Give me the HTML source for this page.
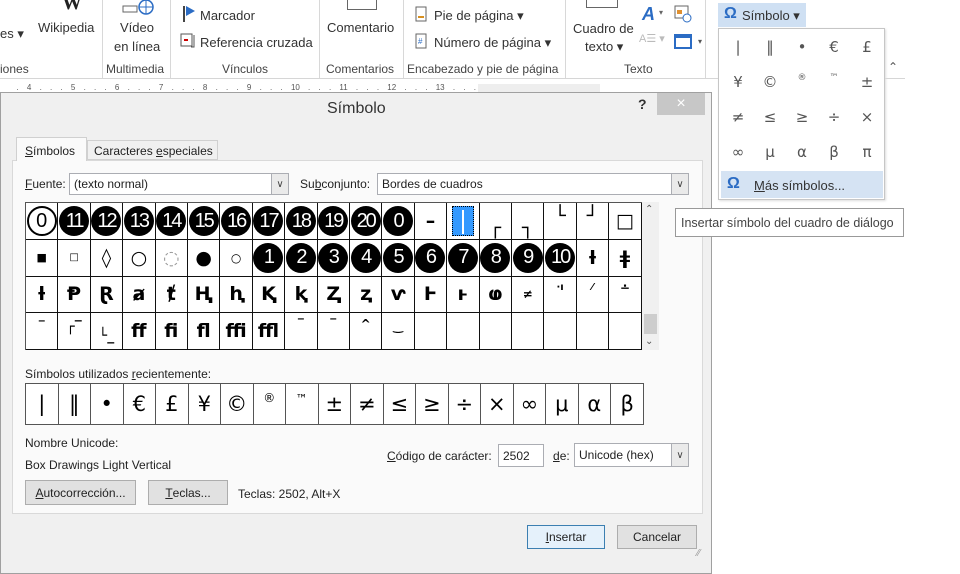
<!DOCTYPE html>
<html><head><meta charset="utf-8">
<style>
*{margin:0;padding:0;box-sizing:border-box}
body{width:960px;height:574px;background:#fff;position:relative;overflow:hidden;font-family:"Liberation Sans","DejaVu Sans",sans-serif;font-size:12px;color:#222}
.a{position:absolute;white-space:nowrap}
.sep{position:absolute;width:1px;background:#d8d8d8;top:0;height:78px}
.g{font-size:12px;color:#444}
.r{font-size:13px;color:#333}
#grid{position:absolute;left:25px;top:202px;width:617px;height:148px;border:1px solid #555;border-right:none;background:#fff}
.cell{position:absolute;width:32.4px;height:37px;border-right:1px solid #111;border-bottom:1px solid #111;display:flex;align-items:center;justify-content:center;font-size:19px;font-weight:bold;color:#000;font-family:"DejaVu Sans",sans-serif}
.bc{width:30px;height:30px;border-radius:50%;background:#000;color:#fff;font-family:"Liberation Sans",sans-serif;font-size:20px;font-weight:normal;display:flex;align-items:center;justify-content:center;letter-spacing:-2px}
.wc{width:30px;height:30px;border-radius:50%;border:2px solid #000;background:#fff;color:#000;font-size:20px;font-weight:normal;font-family:"Liberation Sans",sans-serif;display:flex;align-items:center;justify-content:center}
.btn{position:absolute;background:#e1e1e1;border:1px solid #adadad;font-size:12px;display:flex;align-items:center;justify-content:center}
.inp{position:absolute;background:#fff;border:1px solid #abadb3;font-size:12px;padding-left:4px;display:flex;align-items:center}
.dd{position:absolute;right:0;top:0;bottom:0;width:17px;background:#eaeaea;border-left:1px solid #abadb3;font-size:10px;display:flex;align-items:center;justify-content:center;color:#444}
.rc{position:absolute;top:0;height:40px;width:32.5px;border-right:1px solid #555;display:flex;align-items:center;justify-content:center;font-size:21px;color:#000;font-family:"DejaVu Sans",sans-serif}
.sm{position:absolute;width:36px;height:35px;display:flex;align-items:center;justify-content:center;font-size:15px;color:#555;font-family:"DejaVu Sans",sans-serif}
u{text-decoration:underline}
</style></head><body>

<!-- ribbon -->
<div class="a r" style="left:0;top:26px">es ▾</div>
<div class="a" style="left:62px;top:-8px;font-size:20px;font-weight:bold;font-family:'Liberation Serif',serif">W</div>
<div class="a r" style="left:38px;top:20px">Wikipedia</div>
<div class="sep" style="left:102px"></div>
<svg class="a" style="left:121px;top:0" width="36" height="16"><rect x="2" y="6" width="14" height="6" fill="none" stroke="#666"/><circle cx="25" cy="7" r="7" fill="none" stroke="#2b6cc4" stroke-width="1.5"/><path d="M18 7h14M25 0v14" stroke="#2b6cc4"/></svg>
<div class="a r" style="left:120px;top:20px">Vídeo</div>
<div class="a r" style="left:114px;top:39px">en línea</div>
<div class="sep" style="left:170px"></div>
<div class="a" style="left:183px;top:6px;width:2px;height:16px;background:#444"></div>
<svg class="a" style="left:186px;top:6px" width="10" height="10"><path d="M0 0L9 5L0 10z" fill="#2b6cc4"/></svg>
<div class="a r" style="left:200px;top:8px">Marcador</div>
<svg class="a" style="left:180px;top:33px" width="18" height="16"><rect x="1" y="1" width="11" height="12" fill="none" stroke="#555"/><path d="M4 7h4" stroke="#c00" stroke-width="2"/><path d="M14 2v12h-3" fill="none" stroke="#555"/></svg>
<div class="a r" style="left:200px;top:35px">Referencia cruzada</div>
<div class="sep" style="left:319px"></div>
<div class="a" style="left:347px;top:-4px;width:30px;height:14px;border:1px solid #666;border-top:none"></div>
<div class="a r" style="left:327px;top:20px">Comentario</div>
<div class="sep" style="left:403px"></div>
<svg class="a" style="left:415px;top:6px" width="12" height="16"><rect x="1" y="1" width="10" height="14" fill="#fff" stroke="#666"/><path d="M3 11h6" stroke="#d89020" stroke-width="2"/></svg>
<div class="a r" style="left:434px;top:8px">Pie de página ▾</div>
<svg class="a" style="left:415px;top:33px" width="12" height="16"><rect x="1" y="1" width="10" height="14" fill="#fff" stroke="#666"/><text x="3" y="11" font-size="8" fill="#2b6cc4">#</text></svg>
<div class="a r" style="left:434px;top:35px">Número de página ▾</div>
<div class="sep" style="left:565px"></div>
<div class="a" style="left:586px;top:-4px;width:32px;height:12px;border:1px solid #666;border-top:none"></div>
<div class="a r" style="left:573px;top:21px">Cuadro de</div>
<div class="a r" style="left:585px;top:39px">texto ▾</div>
<div class="a" style="left:642px;top:4px;font-size:18px;font-weight:bold;font-style:italic;color:#2b6cc4">A</div>
<div class="a" style="left:659px;top:8px;font-size:8px;color:#666">▾</div>
<svg class="a" style="left:674px;top:5px" width="18" height="18"><rect x="1" y="1" width="13" height="12" fill="#fff" stroke="#666"/><rect x="3" y="5" width="5" height="4" fill="#e09030"/><circle cx="13" cy="13" r="4" fill="#fff" stroke="#2b6cc4"/></svg>
<div class="a" style="left:639px;top:32px;font-size:11px;color:#bbb">A☰ ▾</div>
<div class="a" style="left:674px;top:34px;width:18px;height:15px;border:2px solid #2b6cc4;border-top-width:4px"></div>
<div class="a" style="left:698px;top:37px;font-size:8px;color:#555">▾</div>
<div class="sep" style="left:705px"></div>
<div class="a g" style="left:0;top:62px">iones</div>
<div class="a g" style="left:106px;top:62px">Multimedia</div>
<div class="a g" style="left:222px;top:62px">Vínculos</div>
<div class="a g" style="left:326px;top:62px">Comentarios</div>
<div class="a g" style="left:407px;top:62px">Encabezado y pie de página</div>
<div class="a g" style="left:624px;top:62px">Texto</div>
<div class="a" style="left:888px;top:60px;font-size:12px;color:#555">⌃</div>
<div class="a" style="left:0;top:78px;width:905px;height:1px;background:#d6d6d6"></div>
<div class="a" style="left:0;top:84px;width:600px;height:8px;font-size:8px;color:#555;overflow:hidden;line-height:8px;word-spacing:6px">&nbsp; . 4 . . . 5 . . . 6 . . . 7 . . . 8 . . . 9 . . . 10 . . . 11 . . . 12 . . . 13 . . . 14</div>
<div class="a" style="left:478px;top:84px;width:122px;height:8px;background:#eee"></div>

<!-- Symbol button & dropdown -->
<div class="a" style="left:718px;top:3px;width:88px;height:24px;background:#cfe0f3"></div>
<div class="a" style="left:724px;top:5px;font-size:16px;color:#2b6cc4;font-weight:bold">Ω</div>
<div class="a r" style="left:742px;top:8px">Símbolo ▾</div>
<div class="a" style="left:718px;top:28px;width:167px;height:172px;background:#fff;border:1px solid #c6c6c6;box-shadow:1px 1px 2px #ddd"></div>
<div class="sm" style="left:720px;top:29px">|</div><div class="sm" style="left:752px;top:29px">‖</div><div class="sm" style="left:784px;top:29px">•</div><div class="sm" style="left:816px;top:29px">€</div><div class="sm" style="left:849px;top:29px">£</div>
<div class="sm" style="left:720px;top:64px">¥</div><div class="sm" style="left:752px;top:64px">©</div><div class="sm" style="left:784px;top:60px;font-size:9px">®</div><div class="sm" style="left:816px;top:60px;font-size:9px">™</div><div class="sm" style="left:849px;top:64px">±</div>
<div class="sm" style="left:720px;top:99px">≠</div><div class="sm" style="left:752px;top:99px">≤</div><div class="sm" style="left:784px;top:99px">≥</div><div class="sm" style="left:816px;top:99px">÷</div><div class="sm" style="left:849px;top:99px">×</div>
<div class="sm" style="left:720px;top:134px">∞</div><div class="sm" style="left:752px;top:134px">μ</div><div class="sm" style="left:784px;top:134px">α</div><div class="sm" style="left:816px;top:134px">β</div><div class="sm" style="left:849px;top:134px">π</div>
<div class="a" style="left:721px;top:171px;width:162px;height:27px;background:#d5e3f3"></div>
<div class="a" style="left:727px;top:175px;font-size:16px;color:#2b6cc4;font-weight:bold">Ω</div>
<div class="a r" style="left:754px;top:178px"><u>M</u>ás símbolos...</div>

<!-- dialog -->
<div class="a" style="left:0;top:92px;width:712px;height:482px;background:#f0f0f0;border:1px solid #a0a0a0"></div>
<div class="a" style="left:327px;top:100px;font-size:16px;color:#333">Símbolo</div>
<div class="a" style="left:638px;top:96px;font-size:14px;font-weight:bold;color:#333">?</div>
<div class="a" style="left:657px;top:93px;width:48px;height:22px;background:#c7c7c7;color:#fff;font-size:16px;text-align:center;line-height:22px">×</div>
<div class="a" style="left:12px;top:160px;width:691px;height:354px;background:#fafafa;border:1px solid #d9d9d9"></div>
<div class="a" style="left:16px;top:137px;width:71px;height:24px;background:#fafafa;border:1px solid #d0d0d0;border-bottom:none;font-size:12px;padding:6px 0 0 8px"><u>S</u>ímbolos</div>
<div class="a" style="left:87px;top:140px;width:131px;height:20px;background:#f0f0f0;border:1px solid #d0d0d0;font-size:12px;padding:3px 0 0 6px">Caracteres <u>e</u>speciales</div>
<div class="a" style="left:25px;top:177px"><u>F</u>uente:</div>
<div class="inp" style="left:69px;top:173px;width:220px;height:22px">(texto normal)<div class="dd">∨</div></div>
<div class="a" style="left:300px;top:177px">Su<u>b</u>conjunto:</div>
<div class="inp" style="left:377px;top:173px;width:312px;height:22px">Bordes de cuadros<div class="dd">∨</div></div>

<div id="grid"></div>
<div class="a" style="left:642px;top:202px;width:17px;height:148px;background:#f0f0f0"></div>
<div class="a" style="left:645px;top:204px;font-size:10px;color:#555">⌃</div>
<div class="a" style="left:644px;top:314px;width:13px;height:20px;background:#cdcdcd"></div>
<div class="a" style="left:645px;top:336px;font-size:10px;color:#555">⌄</div>

<div class="a" style="left:25px;top:367px">Símbolos utilizados <u>r</u>ecientemente:</div>
<div class="a" style="left:25px;top:383px;width:619px;height:42px;border:1px solid #555;background:#fff" id="rec"></div>

<div class="a" style="left:25px;top:436px">Nombre Unicode:</div>
<div class="a" style="left:25px;top:458px">Box Drawings Light Vertical</div>
<div class="a" style="left:387px;top:449px"><u>C</u>ódigo de carácter:</div>
<div class="inp" style="left:498px;top:444px;width:46px;height:23px">2502</div>
<div class="a" style="left:553px;top:449px"><u>d</u>e:</div>
<div class="inp" style="left:574px;top:443px;width:115px;height:24px">Unicode (hex)<div class="dd">∨</div></div>
<div class="btn" style="left:25px;top:480px;width:111px;height:25px"><u>A</u>utocorrección...</div>
<div class="btn" style="left:148px;top:480px;width:80px;height:25px"><u>T</u>eclas...</div>
<div class="a" style="left:238px;top:487px">Teclas: 2502, Alt+X</div>
<div class="btn" style="left:527px;top:525px;width:78px;height:24px;border-color:#3c7fb1;background:#e5f1fb"><u>I</u>nsertar</div>
<div class="btn" style="left:617px;top:525px;width:80px;height:24px">Cancelar</div>
<div class="a" style="left:697px;top:548px;font-size:10px;color:#999">⁄⁄</div>

<!-- tooltip on top -->
<div class="a" style="left:675px;top:208px;width:229px;height:29px;background:#fff;border:1px solid #999;font-size:12.5px;color:#444;padding:7px 0 0 5px;z-index:10">Insertar símbolo del cuadro de diálogo</div>

<script>
var g=document.getElementById('grid'),W=32.4,H=36.7;
function cell(c,r,html){var d=document.createElement('div');d.className='cell';d.style.left=(c*W)+'px';d.style.top=(r*H)+'px';d.innerHTML=html;g.appendChild(d);}
var bc=function(t){return '<div class="bc">'+t+'</div>'};
cell(0,0,'<div class="wc">0</div>');
for(var i=1;i<=10;i++)cell(i,0,bc(10+i));
cell(11,0,bc('0'));
var r0=['–','<div style="width:22px;height:30px;background:#3399ff;border:1px dotted #000;display:flex;justify-content:center"><div style="width:2px;background:#fff;margin-top:3px;height:24px"></div></div>','<span style="margin-top:14px">┌</span>','<span style="margin-top:14px">┐</span>','<span style="margin-bottom:10px">└</span>','<span style="margin-bottom:10px">┘</span>','<span style="font-weight:normal">□</span>'];
for(i=0;i<7;i++)cell(12+i,0,r0[i]);
var r1=['<span style="font-size:11px">■</span>','<span style="font-size:10px;font-weight:normal">□</span>','◊','○','<span style="color:#999;font-weight:normal">◌</span>','●','<span style="font-size:12px;font-weight:normal">○</span>'];
for(i=0;i<7;i++)cell(i,1,r1[i]);
for(i=1;i<=10;i++)cell(6+i,1,bc(i));
cell(17,1,'ƚ');cell(18,1,'ǂ');
var r2=['ƚ','Ᵽ','Ɽ','ⱥ','ⱦ','Ⱨ','ⱨ','Ⱪ','ⱪ','Ⱬ','ⱬ','ⱱ','Ⱶ','ⱶ','ⱷ','<span style="font-size:12px">≠</span>','<span style="font-size:10px;margin-bottom:14px">·ı</span>','<span style="font-size:10px;margin-bottom:14px">⁄</span>','<span style="font-size:12px;margin-bottom:12px">∸</span>'];
for(i=0;i<19;i++)cell(i,2,r2[i]);
var r3=['<span style="font-size:12px;margin-bottom:10px">‾</span>','<span style="font-size:14px;margin-bottom:8px">┌‾</span>','<span style="font-size:14px;margin-top:10px">└_</span>','ff','fi','fl','ffi','ffl','<span style="font-size:12px;margin-bottom:14px">‾</span>','<span style="font-size:12px;margin-bottom:14px">‾</span>','<span style="font-size:12px;margin-bottom:14px">^</span>','<span style="font-size:12px;margin-bottom:10px">‿</span>','','','','','','',''];
for(i=0;i<19;i++)cell(i,3,r3[i]);
var rec=document.getElementById('rec'),rs=['|','‖','•','€','£','¥','©','<span style="font-size:12px;margin-bottom:12px">®</span>','<span style="font-size:12px;margin-bottom:10px">™</span>','±','≠','≤','≥','÷','×','∞','μ','α','β'];
for(i=0;i<19;i++){var d=document.createElement('div');d.className='rc';d.style.left=(i*32.5)+'px';if(i==18)d.style.borderRight='none';d.innerHTML=rs[i];rec.appendChild(d);}
</script>
</body></html>
